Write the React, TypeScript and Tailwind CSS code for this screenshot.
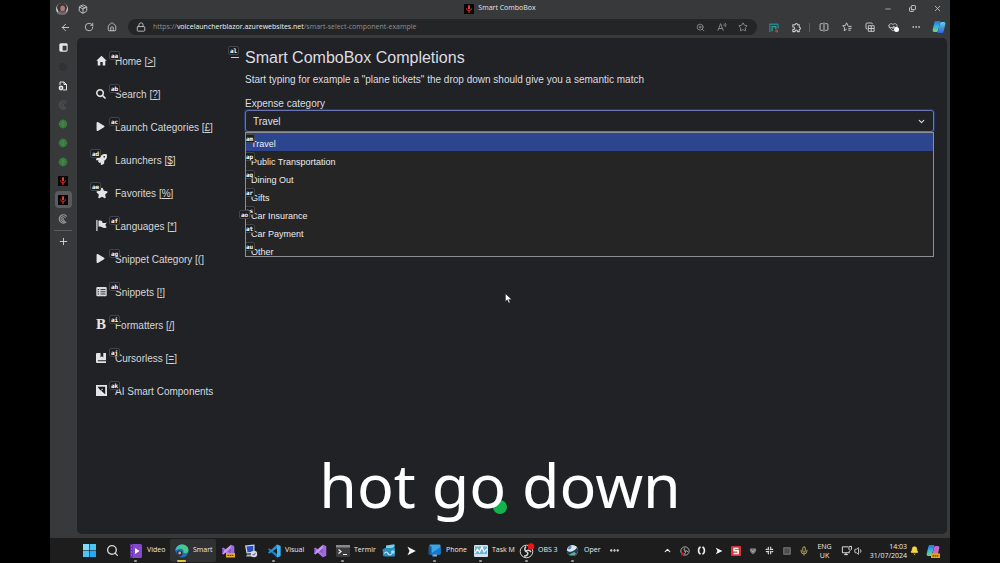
import { useState, type ReactNode } from 'react';
import {
  ArrowLeft, RotateCw, House, Lock, ZoomIn, Star, Puzzle, Ellipsis, Minus, Copy, X, Plus,
  ChevronDown, ChevronUp, Package, Search, Mic, HeartPulse, Volume1, Bell,
} from 'lucide-react';
import { FaSearch, FaPlay, FaRocket, FaStar } from 'react-icons/fa';

const glyph = 'h-[11px] w-[11px]';

function Hint({ code, className }: { code: string; className: string }) {
  return (
    <span
      aria-hidden="true"
      className={`absolute z-10 flex h-[9px] items-center justify-center rounded-[2px] border border-[#434447] bg-[#1c1d20] px-px font-['DejaVu_Sans_Mono',monospace] text-[6px] leading-none font-bold text-white ${className}`}
    >
      {code}
    </span>
  );
}

function MicLogo() {
  return (
    <svg viewBox="0 0 10 10" className="h-[10px] w-[10px]">
      <rect width="10" height="10" fill="#090405" />
      <rect x="4" y="1" width="2" height="4.6" rx="1" fill="#e23b32" />
      <path d="M2.6 4.4c0 3.2 4.8 3.2 4.8 0M5 6.8v2.2" stroke="#e23b32" strokeWidth="1" fill="none" />
    </svg>
  );
}

function GlobeDot() {
  return (
    <svg viewBox="0 0 10 10" className="h-[10px] w-[10px]">
      <circle cx="5" cy="5" r="4.4" fill="#34703a" />
      <path d="M1 5h8M5 1v8M2.4 2.4c2 1.5 3.2 1.5 5.2 0M2.4 7.6c2-1.5 3.2-1.5 5.2 0" stroke="#4f8f52" strokeWidth=".7" fill="none" />
    </svg>
  );
}

function Swirl({ color }: { color: string }) {
  return (
    <svg viewBox="0 0 12 12" className="h-[10px] w-[10px]" fill="none" stroke={color} strokeWidth="1.3">
      <path d="M10.5 3A5 5 0 1 0 10 9.5M9 4.5A3 3 0 1 0 8.500 8.500M7 5.500a1 1 0 1 0 .5 1.500" />
    </svg>
  );
}

function Copilot({ tag }: { tag?: boolean }) {
  return (
    <svg viewBox="0 0 14 14" className="h-[14px] w-[14px]">
      <defs>
        <linearGradient id="cpA" x1="0" y1="0" x2="0" y2="1">
          <stop offset="0" stopColor="#2a6fe0" />
          <stop offset=".5" stopColor="#35b5d8" />
          <stop offset="1" stopColor="#7fd46a" />
        </linearGradient>
        <linearGradient id="cpB" x1="0" y1="0" x2="0" y2="1">
          <stop offset="0" stopColor="#5fd0f0" />
          <stop offset="1" stopColor="#2f62dc" />
        </linearGradient>
        <linearGradient id="cpC" x1="0" y1="0" x2="0" y2="1">
          <stop offset="0" stopColor="#b565e6" />
          <stop offset="1" stopColor="#f06c7c" />
        </linearGradient>
      </defs>
      <path d="M4 1h4.500L6 10.500c-.3 1-.8 1.500-2 1.500H2.200C.8 12 .4 11 .7 9.800L2.400 2.500C2.700 1.500 3 1 4 1z" fill="url(#cpA)" />
      <path d="M10 13H5.500L8 3.500C8.300 2.500 8.800 2 10 2h1.800c1.400 0 1.800 1 1.500 2.200l-1.700 7.300c-.3 1-.6 1.500-1.600 1.500z" fill={tag ? 'url(#cpC)' : 'url(#cpB)'} />
      {tag && <path d="M5 9.500h9V14H5z" fill="#e8a51c" />}
      {tag && <path d="M6.500 11.800h6" stroke="#4a3208" strokeWidth="1.300" strokeDasharray="1.500 .6" />}
    </svg>
  );
}

/* ---------- browser chrome ---------- */

function IconButton({ label, children, className = 'w-[23px]' }: { label: string; children: ReactNode; className?: string }) {
  return (
    <button type="button" aria-label={label} className={`flex h-[17px] shrink-0 items-center justify-center ${className}`}>
      {children}
    </button>
  );
}

function TitleBar() {
  return (
    <div className="grid h-[17px] grid-cols-3 items-center bg-[#38393b] text-[#d6d6d6]">
      <div className="flex items-center">
        <IconButton label="Profile">
          <svg viewBox="0 0 12 12" className="h-3 w-3">
            <circle cx="6" cy="6" r="6" fill="#cfc9cb" />
            <path d="M1 5C1 1 4 0 6.500 0S11 2 11 5l-1.500 5L7 12H4z" fill="#3a3235" />
            <ellipse cx="6.600" cy="5.400" rx="2.400" ry="3" fill="#a97a78" />
            <path d="M1 9.500 4.500 8l2 1.500L9 8l2 1.500C10 11 8 12 6 12S2 11 1 9.500z" fill="#6f6a72" />
          </svg>
        </IconButton>
        <IconButton label="Workspaces" className="w-5"><Package className="h-[10px] w-[10px]" /></IconButton>
      </div>
      <div className="flex items-center justify-center gap-2 font-['Open_Sans',sans-serif] text-[7px] whitespace-nowrap text-[#e4e4e4]">
        <MicLogo />
        <span className="-ml-1">Smart ComboBox</span>
      </div>
      <div className="flex justify-end">
        <IconButton label="Minimise" className="w-[25px]"><Minus className="h-2 w-2" /></IconButton>
        <IconButton label="Restore" className="w-[25px]"><Copy className="h-[7px] w-[7px] -scale-x-100 rotate-180" strokeWidth={3} /></IconButton>
        <IconButton label="Close" className="w-[25px]"><X className="h-[9px] w-[9px]" /></IconButton>
      </div>
    </div>
  );
}

function AddressRow() {
  return (
    <div className="flex h-[20px] items-center bg-[#38393b] pl-[3px] text-[#d0d0d0]">
      <IconButton label="Back" className="w-6"><ArrowLeft className={glyph} /></IconButton>
      <IconButton label="Refresh" className="w-[23px]"><RotateCw className="h-[10px] w-[10px]" /></IconButton>
      <IconButton label="Home" className="w-6"><House className="h-[10px] w-[10px]" /></IconButton>
      <div className="mr-[5px] ml-1 flex h-4 min-w-0 flex-1 items-center rounded-full bg-[#242527] pl-2">
        <Lock className="h-[10px] w-[10px]" />
        <div className="flex min-w-0 flex-1 pl-[7px] font-['Open_Sans',sans-serif] text-[7px] whitespace-nowrap text-[#8f9092]">
          <span>https://</span>
          <span className="text-[#f2f2f2]">voicelauncherblazor.azurewebsites.net</span>
          <span>/smart-select-component-example</span>
        </div>
        <div className="flex text-[#98999b]">
          <IconButton label="Zoom" className="w-[21px]"><ZoomIn className="h-[9px] w-[9px]" /></IconButton>
          <IconButton label="Read aloud" className="w-[21px]">
            <svg viewBox="0 0 12 12" className="h-[10px] w-[10px]" fill="none" stroke="currentColor" strokeWidth="1">
              <path d="M1 10.500 4.300 2l3.300 8.500M2.200 7.800h4.300M8 2.200c.8.700.8 1.800 0 2.600M9.500 1c1.600 1.500 1.600 3.400 0 5" />
            </svg>
          </IconButton>
          <IconButton label="Add to favourites" className="w-[21px]"><Star className="h-[10px] w-[10px]" /></IconButton>
          <span className="w-1" />
        </div>
      </div>
      <IconButton label="Reader extension">
        <svg viewBox="0 0 12 12" className={glyph} fill="none" strokeWidth="1.500">
          <path d="M2 11V2.500h9M11 2.500V7" stroke="#25858a" />
          <path d="M4.500 10V5h4v3" stroke="#2f9d8f" />
          <circle cx="9.500" cy="9.800" r="1.700" fill="#b33d52" />
        </svg>
      </IconButton>
      <IconButton label="Extensions">
        <svg viewBox="0 0 12 12" className="h-[11px] w-[11px]" fill="none" stroke="currentColor" strokeWidth="1.100" strokeLinejoin="round">
          <path d="M2 3h2.500a1.300 1.300 0 1 1 2.600 0H9v2.600a1.300 1.300 0 1 1 0 2.600V10.500H7a1.300 1.300 0 1 0-2.500 0H2V8a1.400 1.400 0 1 0 0-2.500z" />
        </svg>
      </IconButton>
      <span className="mx-[1px] h-[9px] w-[2px] border-l border-[#5b5c5e]" />
      <IconButton label="Split screen">
        <svg viewBox="0 0 12 12" className="h-[10px] w-[10px]" fill="none" stroke="currentColor" strokeWidth="1.100">
          <path d="M4.500 2H2.500c-.8 0-1.200.4-1.200 1.200v5.600c0 .8.400 1.200 1.200 1.200h2M7.500 2h2c.8 0 1.200.4 1.200 1.200v5.600c0 .8-.4 1.200-1.200 1.200h-2M6 .5v11" />
        </svg>
      </IconButton>
      <IconButton label="Favourites">
        <svg viewBox="0 0 12 12" className="h-[10px] w-[10px]" fill="none" stroke="currentColor" strokeWidth="1.100" strokeLinejoin="round">
          <path d="M7.200 4.700 5.500 1 4 4.200.8 4.600l2.400 2.300-.6 3.500 2.900-1.600M7.500 5.200h4M7.500 7.500h4M7.500 9.800h3" />
        </svg>
      </IconButton>
      <IconButton label="Collections">
        <svg viewBox="0 0 12 12" className="h-[10px] w-[10px]" fill="none" stroke="currentColor" strokeWidth="1.100">
          <path d="M3 8.500 1.200 7.800V2.500C1.200 1.500 2 1.200 2.500 1.200h5c1 0 1.500.6 1.500 1.500M4 4.500h7v6.700H4zM4 7.800h7M7.500 4.500v6.700" />
        </svg>
      </IconButton>
      <IconButton label="Browser essentials">
        <span className="relative">
          <HeartPulse className="h-[10px] w-[10px]" />
          <span className="absolute -right-px bottom-0 h-[5px] w-[5px] rounded-full bg-white" />
        </span>
      </IconButton>
      <IconButton label="Settings and more"><Ellipsis className="h-[10px] w-[10px]" /></IconButton>
      <IconButton label="Copilot"><Copilot /></IconButton>
    </div>
  );
}

function TabRail() {
  const tabs: { label: string; icon: ReactNode; active?: boolean }[] = [
    { label: 'Tab actions', icon: <svg viewBox="0 0 10 10" className="h-[9px] w-[9px]"><rect x="1" y="1" width="8" height="8" rx="1" fill="none" stroke="#e6e6e6" strokeWidth="1.200" /><path d="M1 1h8v2H1zM1 1h3v8H1z" fill="#e6e6e6" /></svg> },
    { label: 'Sleeping tab', icon: <span className="h-2 w-2 rounded-full bg-[#313234]" /> },
    { label: 'Document', icon: <svg viewBox="0 0 10 10" className="h-[10px] w-[10px]"><path d="M2 4V1h4l2.500 2.500V9H5M6 1v2.500h2.500" fill="none" stroke="#e6e6e6" /><circle cx="3" cy="7" r="2.400" fill="#e6e6e6" /><circle cx="3" cy="7" r=".8" fill="#38393b" /></svg> },
    { label: 'Assistant', icon: <Swirl color="#505153" /> },
    { label: 'Site one', icon: <GlobeDot /> },
    { label: 'Site two', icon: <GlobeDot /> },
    { label: 'Site three', icon: <GlobeDot /> },
    { label: 'Voice launcher', icon: <MicLogo /> },
    { label: 'Smart ComboBox', icon: <MicLogo />, active: true },
    { label: 'Assistant chat', icon: <Swirl color="#9b9c9e" /> },
  ];
  return (
    <aside className="flex w-[26px] shrink-0 flex-col items-center bg-[#38393b] pt-px text-[#d6d6d6]">
      {tabs.map((t) => (
        <button
          key={t.label}
          type="button"
          aria-label={t.label}
          className={`flex items-center justify-center rounded-[4px] ${t.active ? 'my-px h-[17px] w-[17px] bg-[#5a5b5d]' : 'h-[19px] w-[17px]'}`}
        >
          {t.icon}
        </button>
      ))}
      <span className="mt-[2px] h-px w-[18px] bg-[#5c5d5f]" />
      <IconButton label="New tab" className="mt-[2px] w-[17px]"><Plus className="h-[11px] w-[11px]" /></IconButton>
    </aside>
  );
}

/* ---------- page ---------- */

type NavItem = { code: string; text: string; access?: string; icon: ReactNode; overIcon?: boolean };

const nav: NavItem[] = [
  {
    code: 'aa', text: 'Home', access: '>',
    icon: (
      <svg viewBox="0 0 11 11" className={glyph} fill="#e4e4e6">
        <path d="M5.500.800.3 5.700h1.400V10.500h2.600V7h2.400v3.500h2.600V5.700h1.400z" />
      </svg>
    ),
  },
  { code: 'ab', text: 'Search', access: '?', icon: <FaSearch className="h-[10px] w-[10px]" /> },
  { code: 'ac', text: 'Launch Categories', access: '£', icon: <FaPlay className="h-[9px] w-[9px]" /> },
  { code: 'ad', text: 'Launchers', access: '$', icon: <FaRocket className={glyph} />, overIcon: true },
  { code: 'ae', text: 'Favorites', access: '%', icon: <FaStar className="h-3 w-3" />, overIcon: true },
  {
    code: 'af', text: 'Languages', access: '*',
    icon: (
      <svg viewBox="0 0 11 11" className={glyph} fill="#e4e4e6">
        <path d="M.3 0h1.200v11H.3zM2.500.800c1.500-.6 2.600-.3 3.700.4v1.200c1.300.7 2.700.7 4.600 0L9.300 5l1.500 2.500c-2 .8-3.700.6-5-.4C4.800 6.300 3.800 6.200 2.500 6.700z" />
      </svg>
    ),
  },
  { code: 'ag', text: 'Snippet Category', access: '(', icon: <FaPlay className="h-[9px] w-[9px]" /> },
  {
    code: 'ah', text: 'Snippets', access: '!',
    icon: (
      <svg viewBox="0 0 11 11" className={glyph}>
        <rect x=".3" y="1" width="10.400" height="9.300" rx="1" fill="#dcdcde" />
        <path d="M1.600 3.600h1.500M4.500 3.600h5M1.600 5.800h1.500M4.500 5.800h5M1.600 8h1.500M4.500 8h5" stroke="#303136" />
      </svg>
    ),
  },
  {
    code: 'ai', text: 'Formatters', access: '/',
    icon: <span className="font-['Liberation_Serif',serif] text-[15px] leading-none font-bold">B</span>,
  },
  {
    code: 'aj', text: 'Cursorless', access: '=',
    icon: (
      <svg viewBox="0 0 11 11" className="h-[10px] w-[10px]">
        <path d="M1.500 0H5v5l1.500-1.300L8 5V0h3v8H2v1h9v2H1.500C.6 11 0 10.400 0 9.500v-8C0 .6.600 0 1.500 0z" fill="#e4e4e6" />
      </svg>
    ),
  },
  {
    code: 'ak', text: 'AI Smart Components',
    icon: (
      <svg viewBox="0 0 11 11" className={glyph}>
        <rect width="11" height="11" fill="#e4e4e6" />
        <path d="M1.500 1.700h7.700v7.600L5.800 6.200 4.300 5.200z" fill="#1b1c1f" />
        <path d="M4.500 5.500 7 4" stroke="#e4e4e6" strokeWidth=".8" />
      </svg>
    ),
  },
];

function Sidebar() {
  return (
    <nav className="w-[168px] shrink-0 pt-[6px] pl-[19px] text-[#d6d7d9]">
      <ul>
        {nav.map((n) => (
          <li key={n.code}>
            <a href="#" className="relative flex h-[33px] items-center whitespace-nowrap">
              <span className="flex w-[19px] items-center text-[#e4e4e6]">{n.icon}</span>
              <Hint code={n.code} className={n.overIcon ? 'top-[6px] -left-[6px]' : 'top-[7px] left-[13px]'} />
              <span className="pt-px text-[10px]">
                {n.text}
                {n.access && <> [<span className="underline">{n.access}</span>]</>}
              </span>
            </a>
          </li>
        ))}
      </ul>
    </nav>
  );
}

const options = [
  ['am', 'Travel'], ['ap', 'Public Transportation'], ['aq', 'Dining Out'], ['ar', 'Gifts'],
  ['as', 'Car Insurance'], ['at', 'Car Payment'], ['au', 'Other'],
];

function ComboBox() {
  const [value, setValue] = useState('Travel');
  return (
    <div className="relative">
      <label htmlFor="category" className="block text-[10px] leading-[13px]">Expense category</label>
      <div className="relative">
        <input
          id="category"
          type="text"
          role="combobox"
          aria-expanded="true"
          aria-controls="category-list"
          value={value}
          onChange={(e) => setValue(e.target.value)}
          className="block h-[22px] w-full rounded-[3px] border border-[#6874b4] bg-[#212226] px-[7px] text-[10px] text-[#e2e3e5] ring-1 ring-[#24386e] outline-none"
        />
        <ChevronDown className="absolute top-[7px] right-2 h-[9px] w-[9px]" strokeWidth={3} />
      </div>
      <ul
        id="category-list"
        role="listbox"
        aria-label="Expense category"
        className="absolute inset-x-0 top-full max-h-[125px] overflow-hidden border border-[#8d8e91] bg-[#252525] text-[9px] leading-[12px] text-[#ededed]"
      >
        {options.map(([code, text]) => (
          <li
            key={code}
            role="option"
            aria-selected={text === value}
            onClick={() => setValue(text)}
            className={`relative flex h-[18px] items-center pt-[3px] pl-[5px] ${text === value ? 'bg-[#2d458f]' : ''}`}
          >
            <Hint code={code} className="top-px -left-[2px]" />
            {text}
          </li>
        ))}
      </ul>
      <Hint code="ao" className="top-[113px] -left-[6px]" />
    </div>
  );
}

function Pointer() {
  return (
    <svg viewBox="0 0 8 12" className="absolute top-[255px] left-[428px] h-[11px] w-[7px]">
      <path d="M.5.500v9L2.700 7.500l1.500 3.700 1.600-.7-1.500-3.500h3.200z" fill="#fff" stroke="#17181a" strokeWidth=".5" />
    </svg>
  );
}

function Page() {
  return (
    <div className="relative mt-px mr-[3px] mb-1 ml-px flex min-w-0 flex-1 rounded-[5px] bg-[#212226] font-['Liberation_Sans',Arial,sans-serif]">
      <Sidebar />
      <main className="relative min-w-0 flex-1 pt-[8px] pr-[13px] text-[#dcdde0]">
        <button type="button" aria-label="Toggle navigation" className="absolute top-[13px] -left-[14px] h-[7px] w-2 border-y border-[#c8c9cc]" />
        <Hint code="al" className="top-[8px] -left-[17px]" />
        <h1 className="text-[16px] leading-[23px]">Smart ComboBox Completions</h1>
        <p className="mt-1 mb-[10px] text-[10px] leading-[14px]">
          Start typing for example a "plane tickets" the drop down should give you a semantic match
        </p>
        <ComboBox />
      </main>
      <Pointer />
    </div>
  );
}

/* ---------- taskbar ---------- */

function VisualStudio({ tag }: { tag?: boolean }) {
  return (
    <svg viewBox="0 0 14 14" className="h-[14px] w-[14px]">
      <path d="M9.800.8 13.200 2.300v9.400l-3.400 1.500L3 7 9.800.800z" fill="#8a55c9" />
      <path d="M1 4.500 2.500 3.500 10 10v3L1 5.800z" fill="#a874de" />
      <path d="M1 9.500 2.500 10.500 10 4V1L1 8.200z" fill="#c39af0" />
      <path d="M1 4.500l1.500 1v3L1 9.500z" fill="#7b45bb" />
      <path d="M9.800.8 13.200 2.300v9.400l-3.400 1.500z" fill="#a06bdb" />
      {tag && <><path d="M5 9h9v4.500H5z" fill="#e6a62b" /><path d="M6.500 11.300h6" stroke="#4d3508" strokeDasharray="1.500 .6" /></>}
    </svg>
  );
}

type Task = { name: string; label?: string; icon: ReactNode; running?: boolean; active?: boolean };

const tasks: Task[] = [
  {
    name: 'Start',
    icon: <svg viewBox="0 0 13 13" className="h-[13px] w-[13px]"><path d="M0 0h6.200v6.200H0z" fill="#7fdcfb" /><path d="M6.800 0H13v6.200H6.800zM0 6.800h6.200V13H0z" fill="#4dc4f5" /><path d="M6.800 6.800H13V13H6.800z" fill="#28a8ee" /></svg>,
  },
  { name: 'Search', icon: <Search className="h-[13px] w-[13px] text-[#d5d5d5]" strokeWidth={2.5} /> },
  {
    name: 'Video', label: 'Video', running: true,
    icon: <svg viewBox="0 0 12 14" className="h-[14px] w-3"><rect width="12" height="14" rx="1.500" fill="#8548c8" /><path d="M0 0h2.500v14H0z" fill="#5a2c98" /><path d="M1 2h.8M1 5h.8M1 8h.8M1 11h.8" stroke="#d6b8f5" strokeWidth="1.200" /><path d="m5 4 4.500 3L5 10z" fill="#fff" /></svg>,
  },
  {
    name: 'Smart', label: 'Smart', active: true,
    icon: (
      <svg viewBox="0 0 14 14" className="h-[14px] w-[14px]">
        <circle cx="7" cy="7" r="6.500" fill="#1c72c4" />
        <path d="M.5 6.500C1 2.500 4 .5 7.200.5c3.800 0 6.300 2.600 6.300 5.500 0 2-1.500 3.300-3.500 3.300-1.500 0-2-.8-1.500-1.500C9.500 5.500 5 3 .5 6.500z" fill="#45c98a" />
        <path d="M.5 6.500C1 2.500 4 .5 7.200.5 4 2 2 3.500.5 6.500z" fill="#2fb4dc" />
        <circle cx="4.500" cy="9.500" r="3" fill="#3c2d31" /><circle cx="4.700" cy="9" r="1.400" fill="#c7a09a" />
      </svg>
    ),
  },
  { name: 'Visual Studio Preview', icon: <VisualStudio tag /> },
  {
    name: 'Remote desktop',
    icon: <svg viewBox="0 0 14 14" className="h-[14px] w-[14px]"><path d="M1 1.500 10.500.500v8.500L2.500 9.500z" fill="#d4dbe6" /><path d="M2.500 2.500 9.300 1.800v6L3.500 8.200z" fill="#2c50c4" /><path d="M3 10.500h7v2H2z" fill="#aeb5c0" /><circle cx="10" cy="10" r="3.200" fill="#d5dbe2" /><path d="m8.500 10 1.200 1.200 2-2.400" stroke="#557" fill="none" /></svg>,
  },
  {
    name: 'Visual Studio Code', label: 'Visual', running: true,
    icon: <svg viewBox="0 0 14 14" className="h-[14px] w-[14px]"><path d="M10 .5 13.500 2v10L10 13.500 1 5.400l1.200-1.100L10 10z" fill="#1b7fc0" /><path d="M10 .5v3.700L2.200 9.800 1 8.600z" fill="#2592d8" /><path d="M10 .5 13.500 2v10L10 13.500z" fill="#3db4f4" /></svg>,
  },
  { name: 'Visual Studio', icon: <VisualStudio /> },
  {
    name: 'Terminal', label: 'Termir', running: true,
    icon: <svg viewBox="0 0 14 12" className="h-3 w-[14px]"><rect width="14" height="12" rx="1.500" fill="#3b3b3d" /><path d="M0 0h14v2.500H0z" fill="#8a8a8c" /><path d="m2.500 4.500 2.500 2-2.500 2M7 9.500h4" stroke="#f0f0f0" strokeWidth="1.200" fill="none" /></svg>,
  },
  {
    name: 'Cloud tools',
    icon: <svg viewBox="0 0 14 13" className="h-[13px] w-[14px]"><path d="M4 1.500 12.500.300v3.200L4 5z" fill="#75d3ee" /><path d="M.5 5.500 3 4h10v7c0 1-.5 1.500-1.500 1.500H3C1 12.500.5 11 1 9.500z" fill="#2b8fc0" /><path d="M2.500 9.500c1-2 2.500-2 3.500 0s2.500 2 4 0" stroke="#d3f2fb" fill="none" strokeWidth="1.200" /><circle cx="10.800" cy="8" r="1.800" fill="#9de3f5" /></svg>,
  },
  { name: 'Arrow', icon: <svg viewBox="0 0 9 10" className="h-[10px] w-[9px]"><path d="M.5.800 8.800 5 .5 9.200 2.500 5z" fill="#f4f4f4" /></svg> },
  {
    name: 'Phone', label: 'Phone', running: true,
    icon: <svg viewBox="0 0 13 13" className="h-[13px] w-[13px]"><rect x="1.500" y=".5" width="11" height="10" rx="1" fill="#36a6e8" /><path d="M1.500 10.500 12.500 3v7.500z" fill="#1778cf" /><path d="M.5 2.500h3v8h-3z" fill="#1c5793" /><path d="M4.500 10.500h4.500v2H4.500z" fill="#68b9e8" /></svg>,
  },
  {
    name: 'Task Manager', label: 'Task M', running: true,
    icon: <svg viewBox="0 0 14 12" className="h-3 w-[14px]"><rect width="14" height="12" rx="1" fill="#cfe4ee" /><path d="M1 1.500h12V9H1z" fill="#69b4d8" /><path d="m1 8 2.500-4 2 3 2.500-5 2 5 3-3" stroke="#fff" fill="none" strokeWidth="1.200" /></svg>,
  },
  {
    name: 'OBS', label: 'OBS 3', running: true,
    icon: <svg viewBox="0 0 16 16" className="h-4 w-4" fill="none"><circle cx="7.500" cy="8.500" r="6.300" fill="#1b1b1c" stroke="#d8d8d8" /><path d="M7 3.500c-2 2-1.500 4.500 1 5.200M12 9c-1.500-2.500-4-2.500-5.500.2M5 13c2.800.3 4.500-1.500 3.500-4" stroke="#d8d8d8" strokeWidth="1.500" /><circle cx="12" cy="3.500" r="3.200" fill="#ee1515" /></svg>,
  },
  {
    name: 'OpenShot', label: 'Oper', running: true,
    icon: <svg viewBox="0 0 14 14" className="h-[13px] w-[13px]"><circle cx="7" cy="7" r="6" fill="#dce8ee" /><path d="M1 7c3 3 8 1 11-3.500C14.500 8 12 13 7 13S1 10 1 7z" fill="#243c50" /><path d="M3 11.500c3 1.500 6 1 8-1l-2-2z" fill="#5fae9a" /><path d="M3 2.500c1-.5 3-.5 3 1s-2 3-4 2z" fill="#578fc4" /></svg>,
  },
];

function TaskButton({ task }: { task: Task }) {
  return (
    <button
      type="button"
      aria-label={task.name}
      className={`relative flex h-[23px] shrink-0 items-center rounded-[2px] ${task.label ? 'w-[46px]' : 'w-[23px]'} ${task.active ? 'bg-[#303132]' : ''}`}
    >
      <span className="flex w-[23px] shrink-0 items-center justify-center">{task.icon}</span>
      {task.label && <span className="whitespace-nowrap">{task.label}</span>}
      {task.running && <span className="absolute bottom-0 left-[10px] h-[2px] w-[3px] rounded-full bg-[#9a9a9a]" />}
      {task.active && <span className="absolute bottom-0 left-[7px] h-[2px] w-[9px] rounded-full bg-[#e8c33a]" />}
    </button>
  );
}

const tray: { name: string; icon: ReactNode }[] = [
  { name: 'Show hidden icons', icon: <ChevronUp className="h-[9px] w-[9px]" strokeWidth={3} /> },
  { name: 'OBS', icon: <svg viewBox="0 0 12 12" className="h-[10px] w-[10px]" fill="none"><circle cx="6" cy="6" r="5" stroke="#c6c6c6" /><path d="M6 2.500c-2 1.500-1 3.500.5 3.500M9.500 7C8 5 6.500 5.500 5.500 7M4 9.500c2 0 3-1 2.500-3" stroke="#c6c6c6" /><circle cx="3" cy="9.500" r="2" fill="#d01818" /></svg> },
  { name: 'Brackets', icon: <svg viewBox="0 0 10 10" className="h-[9px] w-[9px]" fill="none" stroke="#f0f0f0" strokeWidth="1.800"><path d="M4 1C1 2 1 8 4 9M6 1c3 1 3 7 0 8" /></svg> },
  { name: 'Arrow', icon: <svg viewBox="0 0 9 10" className="h-2 w-2"><path d="M.5.800 8.800 5 .5 9.200 2.500 5z" fill="#f4f4f4" /></svg> },
  { name: 'Snagit', icon: <svg viewBox="0 0 10 10" className="h-[10px] w-[10px]"><rect width="10" height="10" rx="1" fill="#d83437" /><path d="M7.500 2.500H3v2.300h4.200v2.700H2.500" stroke="#fff" strokeWidth="1.400" fill="none" /></svg> },
  { name: 'Shield', icon: <svg viewBox="0 0 10 10" className="h-2 w-2"><path d="M1 2.500 3 1.200 5 2l2-.8 2 1.300c.5 3-2 5.500-4 6.500-2-1-4.500-3.500-4-6.500z" fill="#77787a" /><path d="m2.500 3.500 2.500 3 2.500-3" stroke="#b9b9b9" fill="none" /></svg> },
  { name: 'Slack', icon: <svg viewBox="0 0 10 10" className="h-[9px] w-[9px]" stroke="#e0e0e0" strokeWidth="1.300" strokeLinecap="round"><path d="M3.700 1.500v2.700M1.500 6.200h2.700M6.300 8.500V5.800M8.500 3.800H5.800M6.300 1.300v1M3.700 8.700v-1M1.300 3.800h1M8.700 6.200h-1" /></svg> },
  { name: 'Device', icon: <svg viewBox="0 0 10 10" className="h-2 w-2"><rect x="1" y="1" width="8" height="8" fill="#4d4e50" stroke="#8c8d8f" /></svg> },
  { name: 'Microphone', icon: <Mic className="h-[10px] w-[10px] text-[#c9bb62]" /> },
];

function Taskbar() {
  return (
    <footer className="flex h-[25px] items-center bg-[#1d1d1e] pr-[5px] pl-7 font-['Open_Sans',sans-serif] text-[7px] text-[#ececec]">
      {tasks.map((t) => <TaskButton key={t.name} task={t} />)}
      <button type="button" aria-label="More apps" className="flex w-[14px] items-center justify-center"><Ellipsis className={glyph} strokeWidth={3} /></button>
      <div className="ml-auto flex items-center">
        {tray.map((t) => (
          <button key={t.name} type="button" aria-label={t.name} className="flex w-[17px] items-center justify-center">{t.icon}</button>
        ))}
        <button type="button" className="w-[25px] text-center leading-[9px]">ENG<br />UK</button>
        <button type="button" aria-label="Display" className="flex w-[18px] justify-center">
          <svg viewBox="0 0 12 12" className="h-[11px] w-[11px]" fill="none" stroke="currentColor">
            <path d="M8 2H1.500v6.500H9V6.500M3.500 10.500h4M5.500 8.500v2" />
            <path d="M9 1.500h2.500v3L10 6 8.500 4.500z" />
          </svg>
        </button>
        <button type="button" aria-label="Volume" className="flex w-2 justify-center"><Volume1 className="h-[10px] w-[10px] shrink-0" /></button>
        <button type="button" className="w-[44px] text-right leading-[9px] whitespace-nowrap">14:03<br />31/07/2024</button>
        <button type="button" aria-label="Notifications" className="flex w-[14px] justify-center"><Bell className="h-[9px] w-[9px] text-[#f3d648]" fill="currentColor" /></button>
        <button type="button" aria-label="Copilot" className="flex w-6 justify-center"><Copilot tag /></button>
      </div>
    </footer>
  );
}

export default function App() {
  return (
    <div className="min-h-screen bg-black px-[5%]">
      <div className="relative flex min-h-screen flex-col bg-[#38393b]">
        <TitleBar />
        <AddressRow />
        <div className="flex flex-1">
          <TabRail />
          <Page />
        </div>
        <Taskbar />
        <div className="pointer-events-none absolute inset-x-0 bottom-[37px] text-center font-['Noto_Sans',sans-serif] text-[61px] leading-[82px] text-white">
          <span className="absolute bottom-3 left-1/2 h-[14px] w-[14px] -translate-x-1/2 rounded-full bg-[#12b24d]" />
          <span className="relative">hot go down</span>
        </div>
      </div>
    </div>
  );
}
